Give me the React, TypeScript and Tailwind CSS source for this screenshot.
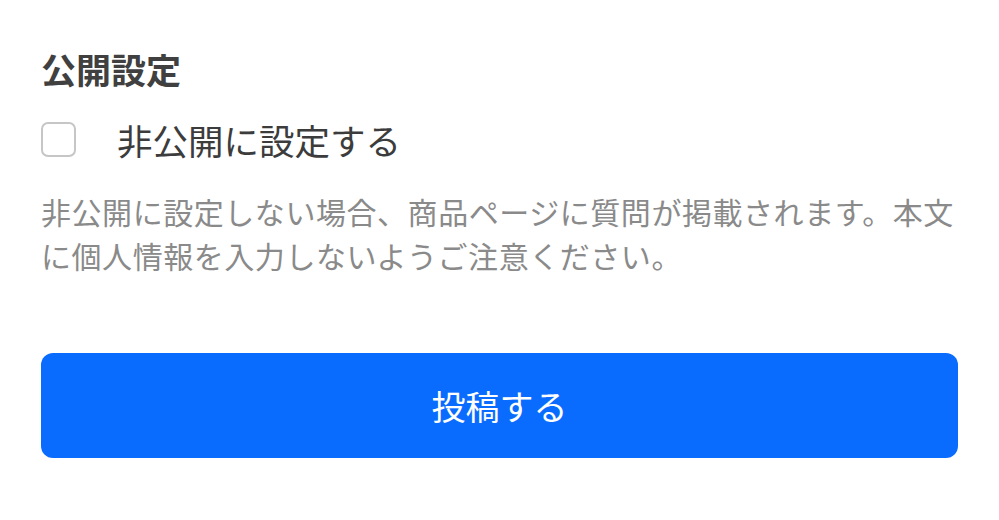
export default function App() {
  return (
    <div
      className="flex w-[999px] h-[520px] flex-col bg-white px-[41px] pt-[48px]"
      style={{ fontFamily: '"Noto Sans CJK JP", "Noto Sans", sans-serif' }}
    >
      <h2 className="text-[35px] leading-[41px] font-bold text-[#404040]">公開設定</h2>

      <label className="mt-[33px] flex items-center gap-[41px]">
        <span className="h-[35px] w-[35px] shrink-0 rounded-[7px] border-2 border-[#c6c6c6] bg-white" />
        <span className="text-[35.5px] leading-[35px] text-[#3c3c3c]">非公開に設定する</span>
      </label>

      <p className="mt-[32px] text-[30px] leading-[44px] tracking-[0.55px] text-[#8a8a8a]">
        非公開に設定しない場合、商品ページに質問が掲載されます。本文に個人情報を入力しないようご注意ください。
      </p>

      <button className="mt-[76px] flex h-[105px] w-full items-center justify-center rounded-[12px] bg-[#0a6cff] text-[34px] text-white">
        投稿する
      </button>
    </div>
  )
}
